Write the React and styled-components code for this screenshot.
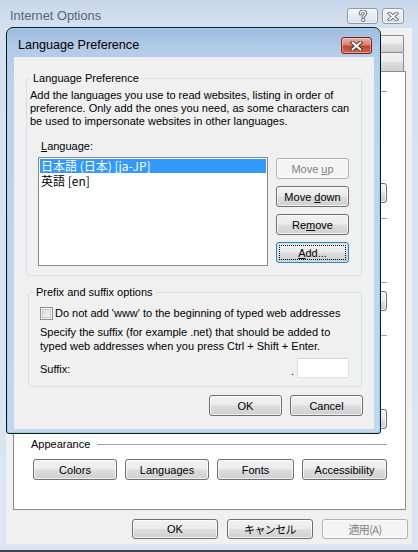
import React from "react";
import styled, { createGlobalStyle, css } from "styled-components";

const UI_FONT = `"Liberation Sans", Arial, sans-serif`;
const JP_FONT = `"Noto Sans CJK JP", "Liberation Sans", sans-serif`;

const GlobalStyle = createGlobalStyle`
  html, body {
    margin: 0;
    padding: 0;
  }
  body {
    width: 418px;
    height: 552px;
    overflow: hidden;
    background: #dce7f3;
    font-family: ${UI_FONT};
    font-size: 11px;
    color: #000;
  }
`;

const Desktop = styled.div`
  position: relative;
  width: 418px;
  height: 552px;
  overflow: hidden;
`;

/* ---------- outer window (Internet Options, inactive) ---------- */

const OuterWindow = styled.div`
  box-sizing: border-box;
  width: 418px;
  height: 552px;
  display: flex;
  flex-direction: column;
  padding: 0 6px 6px 6px;
  background: linear-gradient(180deg, #c8d7ea 0px, #d5e1f0 28px, #dbe6f2 100%);
  border-bottom: 2px solid #3f4652;
`;

const OuterTitleBar = styled.div`
  height: 28px;
  box-sizing: border-box;
  padding: 8px 8px 0 4px;
  display: flex;
  align-items: flex-start;
`;

const OuterTitle = styled.div`
  flex: 1;
  font-size: 12.8px;
  line-height: 15px;
  color: #56647a;
`;

const CaptionButtons = styled.div`
  display: flex;
  gap: 4px;
`;

const CaptionButton = styled.div`
  box-sizing: border-box;
  width: ${(p) => p.$w}px;
  height: 16px;
  border: 1px solid #8e9aab;
  border-radius: 3px;
  background: linear-gradient(180deg, #f4f7fa 0%, #e6ecf2 50%, #d9e1ea 100%);
  box-shadow: inset 0 0 0 1px rgba(255, 255, 255, 0.6);
  display: flex;
  align-items: center;
  justify-content: center;
`;

const Client = styled.div`
  flex: 1;
  background: #f0f0f0;
  display: flex;
  flex-direction: column;
  padding: 7px 6px 0 7px;
`;

const TabStrip = styled.div`
  display: flex;
  flex-direction: column;
  margin-right: 2px;
`;

const TabRow = styled.div`
  display: flex;
  height: ${(p) => p.$h}px;
  margin-left: ${(p) => p.$indent}px;
`;

const Tab = styled.div`
  flex: 1;
  box-sizing: border-box;
  border: 1px solid #898c95;
  border-bottom: none;
  margin-right: -1px;
  border-radius: 2px 2px 0 0;
  background: linear-gradient(180deg, #f2f2f2 0%, #ebebeb 50%, #dddddd 51%, #cfcfcf 100%);
  &:last-child {
    margin-right: 0;
  }
`;

const Panel = styled.div`
  box-sizing: border-box;
  height: 439px;
  border: 1px solid #898c95;
  background: #fff;
  padding: 12px 18px 0 17px;
  display: flex;
  flex-direction: column;
`;

const SectionHead = styled.div`
  display: flex;
  align-items: center;
  gap: 7px;
  height: 14px;
  line-height: 14px;
  &::after {
    content: "";
    flex: 1;
    height: 1px;
    background: #a0a0a0;
  }
`;

const SectionBody = styled.div`
  box-sizing: border-box;
  height: ${(p) => p.$h}px;
  display: flex;
  flex-direction: column;
  justify-content: ${(p) => (p.$end ? "flex-end" : "flex-start")};
  padding: ${(p) => p.$pad || "0"};
`;

const HomeBox = styled.div`
  box-sizing: border-box;
  margin: 0 0 12px 40px;
  width: 290px;
  height: 48px;
  border: 1px solid #abadb3;
`;

const ButtonRow = styled.div`
  display: flex;
  justify-content: ${(p) => p.$justify || "flex-end"};
  align-items: center;
  gap: ${(p) => (p.$gap === undefined ? 9 : p.$gap)}px;
  padding: ${(p) => p.$pad || "0"};
`;

const BottomRow = styled.div`
  display: flex;
  justify-content: flex-end;
  gap: 9px;
  padding-top: 9px;
  margin-right: -2px;
`;

/* ---------- buttons ---------- */

const Button = styled.button`
  position: relative;
  box-sizing: border-box;
  flex: none;
  width: ${(p) => p.$w || 73}px;
  height: ${(p) => p.$h || 21}px;
  margin: 0;
  padding: 0;
  font-family: ${(p) => (p.$jp ? JP_FONT : UI_FONT)};
  font-size: 11px;
  letter-spacing: ${(p) => (p.$jp ? "-0.6px" : "0")};
  color: #000;
  border: 1px solid #707070;
  border-radius: 3px;
  background: linear-gradient(180deg, #f2f2f2 0%, #ebebeb 48%, #dddddd 52%, #cfcfcf 100%);
  box-shadow: inset 0 0 0 1px rgba(255, 255, 255, 0.7);
  cursor: default;

  u {
    text-decoration: underline;
    text-underline-offset: 1px;
  }

  ${(p) =>
    p.disabled &&
    css`
      color: #838383;
      border-color: #adb2b5;
      background: #f4f4f4;
      box-shadow: inset 0 0 0 1px #fcfcfc;
    `}

  ${(p) =>
    p.$focused &&
    css`
      border-color: #3c7fb1;
      box-shadow: inset 0 0 0 1px #b8e4fb;
      &::after {
        content: "";
        position: absolute;
        inset: 2px;
        border: 1px dotted #000;
      }
    `}
`;

/* ---------- dialog (Language Preference, active) ---------- */

const Dialog = styled.div`
  position: absolute;
  left: 6px;
  top: 27px;
  width: 375px;
  height: 407px;
  box-sizing: border-box;
  border: 1px solid #151515;
  border-radius: 7px 7px 3px 3px;
  background: linear-gradient(180deg, #9ebbde 0px, #b2cbe8 20px, #bcd3ec 60px, #c1d7ee 100%);
  box-shadow: inset 0 0 0 1px #8fd7f2;
  padding: 0 6px 4px 7px;
  display: flex;
  flex-direction: column;
`;

const DialogTitleBar = styled.div`
  height: 29px;
  box-sizing: border-box;
  padding: 9px 2px 0 4px;
  display: flex;
  align-items: flex-start;
`;

const DialogTitle = styled.div`
  flex: 1;
  font-size: 12.6px;
  line-height: 17px;
  color: #000;
`;

const CloseButton = styled.div`
  box-sizing: border-box;
  width: 31px;
  height: 17px;
  border: 1px solid #6f2a24;
  border-radius: 3px;
  background: linear-gradient(180deg, #eab3a6 0%, #d9836f 45%, #c4432c 55%, #d06a4e 100%);
  box-shadow: inset 0 0 0 1px rgba(255, 220, 210, 0.45);
  display: flex;
  align-items: center;
  justify-content: center;
`;

const DialogClient = styled.div`
  flex: 1;
  background: #f0f0f0;
  display: flex;
  flex-direction: column;
  padding-top: 14px;
`;

const GroupBox = styled.fieldset`
  margin: ${(p) => p.$margin};
  padding: 0;
  border: 1px solid #d5dfe5;
  border-radius: 3px;
  min-width: 0;
`;

const Legend = styled.legend`
  margin-left: ${(p) => p.$offset}px;
  padding: 0 2px;
  line-height: 14px;
  font-size: 11px;
`;

const Para = styled.div`
  line-height: ${(p) => p.$lh || 13}px;
  padding: ${(p) => p.$pad};
`;

const LangLayout = styled.div`
  display: flex;
  align-items: flex-start;
  gap: 8px;
  padding: 4px 0 9px 11px;
`;

const ListBox = styled.div`
  box-sizing: border-box;
  width: 230px;
  height: 109px;
  border: 1px solid #828790;
  background: #fff;
  padding: 1px;
  display: flex;
  flex-direction: column;
  gap: 1px;
`;

const ListItem = styled.div`
  height: 14px;
  line-height: 14px;
  padding-left: 1px;
  font-family: ${JP_FONT};
  font-size: 12px;
  white-space: nowrap;
  ${(p) =>
    p.$selected &&
    css`
      background: #3399ff;
      color: #fff;
    `}
`;

const SideButtons = styled.div`
  display: flex;
  flex-direction: column;
  gap: 7px;
  padding-top: 1px;
`;

const CheckRow = styled.label`
  display: flex;
  align-items: center;
  gap: 2px;
  height: 13px;
  line-height: 13px;
  padding: 8px 0 0 11px;
`;

const CheckBox = styled.span`
  box-sizing: border-box;
  width: 13px;
  height: 13px;
  border: 1px solid #8e8f8f;
  background: linear-gradient(135deg, #dcdcdc 0%, #f6f6f6 100%);
  box-shadow: inset 0 0 0 1px #f4f4f4, inset 0 0 0 2px #c9c9c9;
`;

const SuffixRow = styled.div`
  display: flex;
  align-items: center;
  padding: 5px 12px 8px 11px;
`;

const SuffixLabel = styled.span`
  flex: 1;
  line-height: 13px;
  padding-top: 2px;
`;

const Dot = styled.span`
  align-self: flex-end;
  line-height: 13px;
  margin-right: 3px;
`;

const TextInput = styled.div`
  box-sizing: border-box;
  width: 52px;
  height: 20px;
  background: #fff;
  border: 1px solid #dfe3e8;
  border-top-color: #d2d6dc;
`;

const DialogButtons = styled.div`
  display: flex;
  justify-content: flex-end;
  gap: 8px;
  padding: 8px 11px 0 0;
`;

/* ---------- icons ---------- */

const HelpGlyph = () => (
  <svg width="12" height="12" viewBox="0 0 12 12">
    <g fill="none" strokeLinecap="round">
      <path d="M3.3 3.8 C3.3 1.9 4.6 1.2 6 1.2 C7.6 1.2 8.7 2.1 8.7 3.5 C8.7 5.2 6.2 5.4 6.2 7.3" stroke="#5a6678" strokeWidth="3.2" />
      <path d="M3.3 3.8 C3.3 1.9 4.6 1.2 6 1.2 C7.6 1.2 8.7 2.1 8.7 3.5 C8.7 5.2 6.2 5.4 6.2 7.3" stroke="#fff" strokeWidth="1.4" />
    </g>
    <rect x="4.7" y="8.6" width="3" height="3" rx="0.6" fill="#fff" stroke="#5a6678" strokeWidth="0.9" />
  </svg>
);

const CrossGlyph = ({ outline, w = 13, h = 10 }) => (
  <svg width={w} height={h} viewBox="0 0 13 10">
    <g strokeLinecap="square">
      <path d="M2.6 1.6 L10.4 8.4 M10.4 1.6 L2.6 8.4" stroke={outline} strokeWidth="3.9" />
      <path d="M2.6 1.6 L10.4 8.4 M10.4 1.6 L2.6 8.4" stroke="#fff" strokeWidth="2" />
    </g>
  </svg>
);

export default function App() {
  return (
    <>
      <GlobalStyle />
      <Desktop>
        <OuterWindow>
          <OuterTitleBar>
            <OuterTitle>Internet Options</OuterTitle>
            <CaptionButtons>
              <CaptionButton $w={31}>
                <HelpGlyph />
              </CaptionButton>
              <CaptionButton $w={22}>
                <CrossGlyph outline="#5a6678" w={12} h={9} />
              </CaptionButton>
            </CaptionButtons>
          </OuterTitleBar>

          <Client>
            {/* tab headers are covered by the dialog; only their right ends show */}
            <TabStrip>
              <TabRow $h={17} $indent={8}>
                <Tab />
                <Tab />
                <Tab />
              </TabRow>
              <TabRow $h={19} $indent={0}>
                <Tab />
                <Tab />
                <Tab />
                <Tab />
              </TabRow>
            </TabStrip>

            <Panel>
              <SectionHead />
              <SectionBody $h={113} $end $pad="0 0 8px 2px">
                <HomeBox />
                <ButtonRow $gap={8}>
                  <Button $w={84} $h={20} />
                  <Button $w={84} $h={20} />
                  <Button $w={84} $h={20} />
                </ButtonRow>
              </SectionBody>

              <SectionHead />
              <SectionBody $h={50} />

              <SectionHead />
              <SectionBody $h={39} $pad="2px 0 0 0">
                <ButtonRow>
                  <Button $w={84} $h={20} />
                </ButtonRow>
              </SectionBody>

              <SectionHead />
              <SectionBody $h={95} $end $pad="0 0 8px 0">
                <ButtonRow $gap={8}>
                  <Button $w={84} $h={20} />
                  <Button $w={84} $h={20} />
                </ButtonRow>
              </SectionBody>

              <SectionHead>Appearance</SectionHead>
              <ButtonRow $justify="flex-start" $gap={8} $pad="8px 0 0 2px">
                <Button $w={84} $h={21}>Colors</Button>
                <Button $w={84} $h={21}>Languages</Button>
                <Button $w={77} $h={21}>Fonts</Button>
                <Button $w={85} $h={21}>Accessibility</Button>
              </ButtonRow>
            </Panel>

            <BottomRow>
              <Button $w={86} $h={20}>OK</Button>
              <Button $w={86} $h={20} $jp>キャンセル</Button>
              <Button $w={86} $h={20} $jp disabled>適用(A)</Button>
            </BottomRow>
          </Client>
        </OuterWindow>

        <Dialog>
          <DialogTitleBar>
            <DialogTitle>Language Preference</DialogTitle>
            <CloseButton>
              <CrossGlyph outline="#3b3b3b" />
            </CloseButton>
          </DialogTitleBar>

          <DialogClient>
            <GroupBox $margin="0 12px 0 12px">
              <Legend $offset={4}>Language Preference</Legend>
              <Para $pad="4px 2px 0 3px">
                Add the languages you use to read websites, listing in order of
                preference. Only add the ones you need, as some characters can
                be used to impersonate websites in other languages.
              </Para>
              <Para $pad="12px 0 0 14px">
                <u>L</u>anguage:
              </Para>
              <LangLayout>
                <ListBox>
                  <ListItem $selected>日本語 (日本) [ja-JP]</ListItem>
                  <ListItem>英語 [en]</ListItem>
                </ListBox>
                <SideButtons>
                  <Button disabled>
                    Move <u>u</u>p
                  </Button>
                  <Button>
                    Move <u>d</u>own
                  </Button>
                  <Button>
                    Re<u>m</u>ove
                  </Button>
                  <Button $focused>
                    <u>A</u>dd...
                  </Button>
                </SideButtons>
              </LangLayout>
            </GroupBox>

            <GroupBox $margin="9px 12px 0 14px">
              <Legend $offset={5}>Prefix and suffix options</Legend>
              <CheckRow>
                <CheckBox />
                <span>Do not add 'www' to the beginning of typed web addresses</span>
              </CheckRow>
              <Para $lh={14} $pad="5px 4px 0 11px">
                Specify the suffix (for example .net) that should be added to
                typed web addresses when you press Ctrl + Shift + Enter.
              </Para>
              <SuffixRow>
                <SuffixLabel>Suffix:</SuffixLabel>
                <Dot>.</Dot>
                <TextInput />
              </SuffixRow>
            </GroupBox>

            <DialogButtons>
              <Button>OK</Button>
              <Button>Cancel</Button>
            </DialogButtons>
          </DialogClient>
        </Dialog>
      </Desktop>
    </>
  );
}
